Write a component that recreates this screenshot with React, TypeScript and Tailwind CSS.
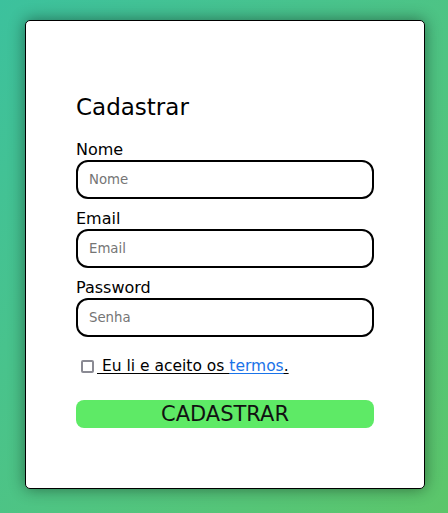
const font = { fontFamily: '"DejaVu Sans", "Liberation Sans", sans-serif' };

interface FieldProps {
  label: string;
  placeholder: string;
  type?: string;
}

function Field({ label, placeholder, type = "text" }: FieldProps) {
  return (
    <div className="flex flex-col mb-[10px]">
      <label className="text-[16px] leading-[20px] text-black">{label}</label>
      <input
        type={type}
        placeholder={placeholder}
        style={font}
        className="h-[39px] w-full rounded-[12px] border-2 border-black bg-white px-[11px] text-[13.3px] text-black outline-none placeholder:text-[#757575]"
      />
    </div>
  );
}

export default function App() {
  return (
    <div
      style={font}
      className="min-h-[513px] w-full bg-linear-to-br from-[#3cc19d] to-[#5cc66a] pt-[20px] pl-[25px]"
    >
      <div className="w-[400px] h-[469px] rounded-[5px] border border-black bg-white px-[50px] pt-[72px] shadow-[0_0_16px_rgba(0,0,0,0.45)]">
        <h2 className="text-[23px] leading-[28px] text-black mb-[19px]">Cadastrar</h2>

        <Field label="Nome" placeholder="Nome" />
        <Field label="Email" placeholder="Email" type="email" />
        <Field label="Password" placeholder="Senha" type="password" />

        <div className="flex items-center mt-[19px] h-[20px]">
          <input
            type="checkbox"
            className="m-0 ml-[5px] mr-[3px] h-[13px] w-[13px] shrink-0 appearance-none rounded-[2px] border-2 border-[#8a8a93] bg-white"
          />
          <label className="text-[15.5px] leading-[20px] text-black underline underline-offset-[2px] whitespace-pre">
            {"\u00a0Eu li e aceito os "}
            <a className="text-[#1a73e8]">termos</a>.
          </label>
        </div>

        <button
          style={font}
          className="mt-[24px] h-[28px] w-full rounded-[8px] bg-[#5eea66] text-[21px] leading-[28px] text-[#111]"
        >
          CADASTRAR
        </button>
      </div>
    </div>
  );
}
